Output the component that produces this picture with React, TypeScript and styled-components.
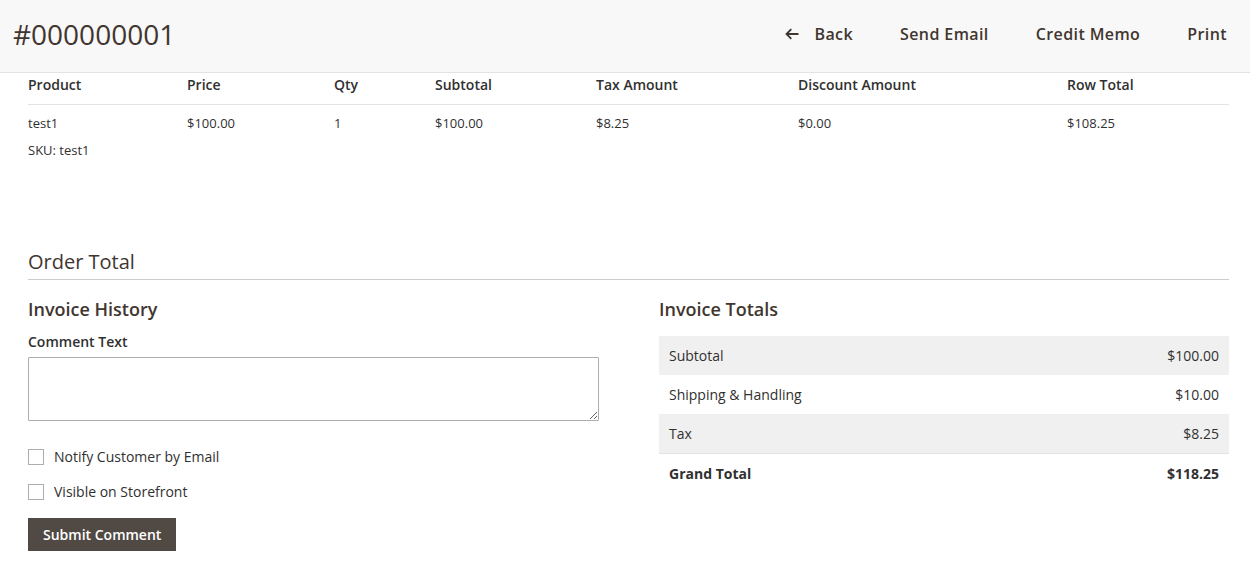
import React from "react";
import styled, { createGlobalStyle } from "styled-components";

const GlobalStyle = createGlobalStyle`
  html, body {
    margin: 0;
    padding: 0;
    background: #ffffff;
    font-family: "Open Sans", "Liberation Sans", sans-serif;
    color: #303030;
  }
  * { box-sizing: border-box; }
`;

const Page = styled.div`
  width: 1250px;
  min-height: 569px;
  background: #fff;
`;

const Header = styled.header`
  height: 73px;
  display: flex;
  align-items: center;
  justify-content: space-between;
  background: #f8f8f8;
  border-bottom: 1px solid #e3e3e3;
  padding: 0 23px 5px 13px;
`;

const Title = styled.h1`
  margin: 0;
  font-size: 28px;
  font-weight: 400;
  color: #41362f;
`;

const Actions = styled.nav`
  display: flex;
  align-items: center;
  gap: 47px;
  margin-top: 1px;
`;

const ActionButton = styled.button`
  display: flex;
  align-items: center;
  gap: 15px;
  border: 0;
  background: none;
  padding: 0;
  font-family: inherit;
  font-size: 16px;
  font-weight: 600;
  letter-spacing: 0.4px;
  color: #41362f;
  cursor: pointer;
  svg { display: block; }
`;

const Content = styled.main`
  padding: 0 21px 0 28px;
`;

const ItemsGrid = styled.div`
  display: grid;
  grid-template-columns: 159px 147px 101px 161px 202px 269px 1fr;
`;

const HeadCell = styled.div`
  font-size: 14px;
  font-weight: 600;
  color: #303030;
  padding: 2px 0 9px;
  border-bottom: 1px solid #e3e3e3;
  line-height: 20px;
`;

const Cell = styled.div`
  font-size: 13px;
  color: #303030;
  padding-top: 8px;
  line-height: 20px;
`;

const Sku = styled.div`
  margin-top: 7px;
`;

const SectionTitle = styled.h2`
  margin: 88px 0 0;
  padding-bottom: 3px;
  font-size: 20px;
  font-weight: 400;
  line-height: 28px;
  color: #41362f;
  border-bottom: 1px solid #cccccc;
`;

const Columns = styled.div`
  display: grid;
  grid-template-columns: 571px 1fr;
  column-gap: 60px;
  margin-top: 16px;
`;

const BlockTitle = styled.h3`
  margin: 0;
  font-size: 18px;
  font-weight: 600;
  line-height: 26px;
  color: #41362f;
`;

const FieldLabel = styled.label`
  display: block;
  margin-top: 10px;
  font-size: 14px;
  font-weight: 600;
  line-height: 20px;
  color: #303030;
`;

const Comment = styled.textarea`
  display: block;
  width: 571px;
  height: 64px;
  margin-top: 5px;
  border: 1px solid #adadad;
  border-radius: 1px;
  font-family: inherit;
  font-size: 14px;
  resize: vertical;
`;

const CheckRow = styled.label<{ $top: number }>`
  display: flex;
  align-items: center;
  gap: 10px;
  margin-top: ${(p) => p.$top}px;
  font-size: 14px;
  line-height: 20px;
  color: #303030;
`;

const Box = styled.span`
  width: 16px;
  height: 16px;
  border: 1px solid #adadad;
  background: #fff;
  flex: none;
`;

const SubmitButton = styled.button`
  margin-top: 16px;
  height: 33px;
  padding: 0 15px;
  border: 0;
  background: #514943;
  color: #ffffff;
  font-family: inherit;
  font-size: 14px;
  font-weight: 600;
  cursor: pointer;
`;

const TotalsTable = styled.div`
  margin-top: 14px;
`;

const TotalRow = styled.div<{ $shade?: boolean; $grand?: boolean }>`
  display: flex;
  justify-content: space-between;
  align-items: center;
  height: ${(p) => (p.$grand ? 40 : 39)}px;
  padding: 0 10px;
  font-size: 14px;
  font-weight: ${(p) => (p.$grand ? 700 : 400)};
  color: #303030;
  background: ${(p) => (p.$shade ? "#f0f0f0" : "#ffffff")};
  border-top: ${(p) => (p.$grand ? "1px solid #e3e3e3" : "0")};
`;

const BackArrow = () => (
  <svg width="14" height="12" viewBox="0 0 14 12" fill="none">
    <path d="M13.5 6H1.5M6.3 1.2L1.5 6l4.8 4.8" stroke="#41362f" strokeWidth="1.8" />
  </svg>
);

const columns = ["Product", "Price", "Qty", "Subtotal", "Tax Amount", "Discount Amount", "Row Total"];

const totals = [
  { label: "Subtotal", value: "$100.00", shade: true },
  { label: "Shipping & Handling", value: "$10.00", shade: false },
  { label: "Tax", value: "$8.25", shade: true },
];

const App = () => {
  return (
    <>
      <GlobalStyle />
      <Page>
        <Header>
          <Title>#000000001</Title>
          <Actions>
            <ActionButton>
              <BackArrow />
              Back
            </ActionButton>
            <ActionButton>Send Email</ActionButton>
            <ActionButton>Credit Memo</ActionButton>
            <ActionButton>Print</ActionButton>
          </Actions>
        </Header>

        <Content>
          <ItemsGrid>
            {columns.map((c) => (
              <HeadCell key={c}>{c}</HeadCell>
            ))}
            <Cell>
              test1
              <Sku>SKU: test1</Sku>
            </Cell>
            <Cell>$100.00</Cell>
            <Cell>1</Cell>
            <Cell>$100.00</Cell>
            <Cell>$8.25</Cell>
            <Cell>$0.00</Cell>
            <Cell>$108.25</Cell>
          </ItemsGrid>

          <SectionTitle>Order Total</SectionTitle>

          <Columns>
            <div>
              <BlockTitle>Invoice History</BlockTitle>
              <FieldLabel htmlFor="comment">Comment Text</FieldLabel>
              <Comment id="comment" />
              <CheckRow $top={26}>
                <Box />
                Notify Customer by Email
              </CheckRow>
              <CheckRow $top={15}>
                <Box />
                Visible on Storefront
              </CheckRow>
              <SubmitButton>Submit Comment</SubmitButton>
            </div>
            <div>
              <BlockTitle>Invoice Totals</BlockTitle>
              <TotalsTable>
                {totals.map((t) => (
                  <TotalRow key={t.label} $shade={t.shade}>
                    <span>{t.label}</span>
                    <span>{t.value}</span>
                  </TotalRow>
                ))}
                <TotalRow $grand>
                  <span>Grand Total</span>
                  <span>$118.25</span>
                </TotalRow>
              </TotalsTable>
            </div>
          </Columns>
        </Content>
      </Page>
    </>
  );
};

export default App;
